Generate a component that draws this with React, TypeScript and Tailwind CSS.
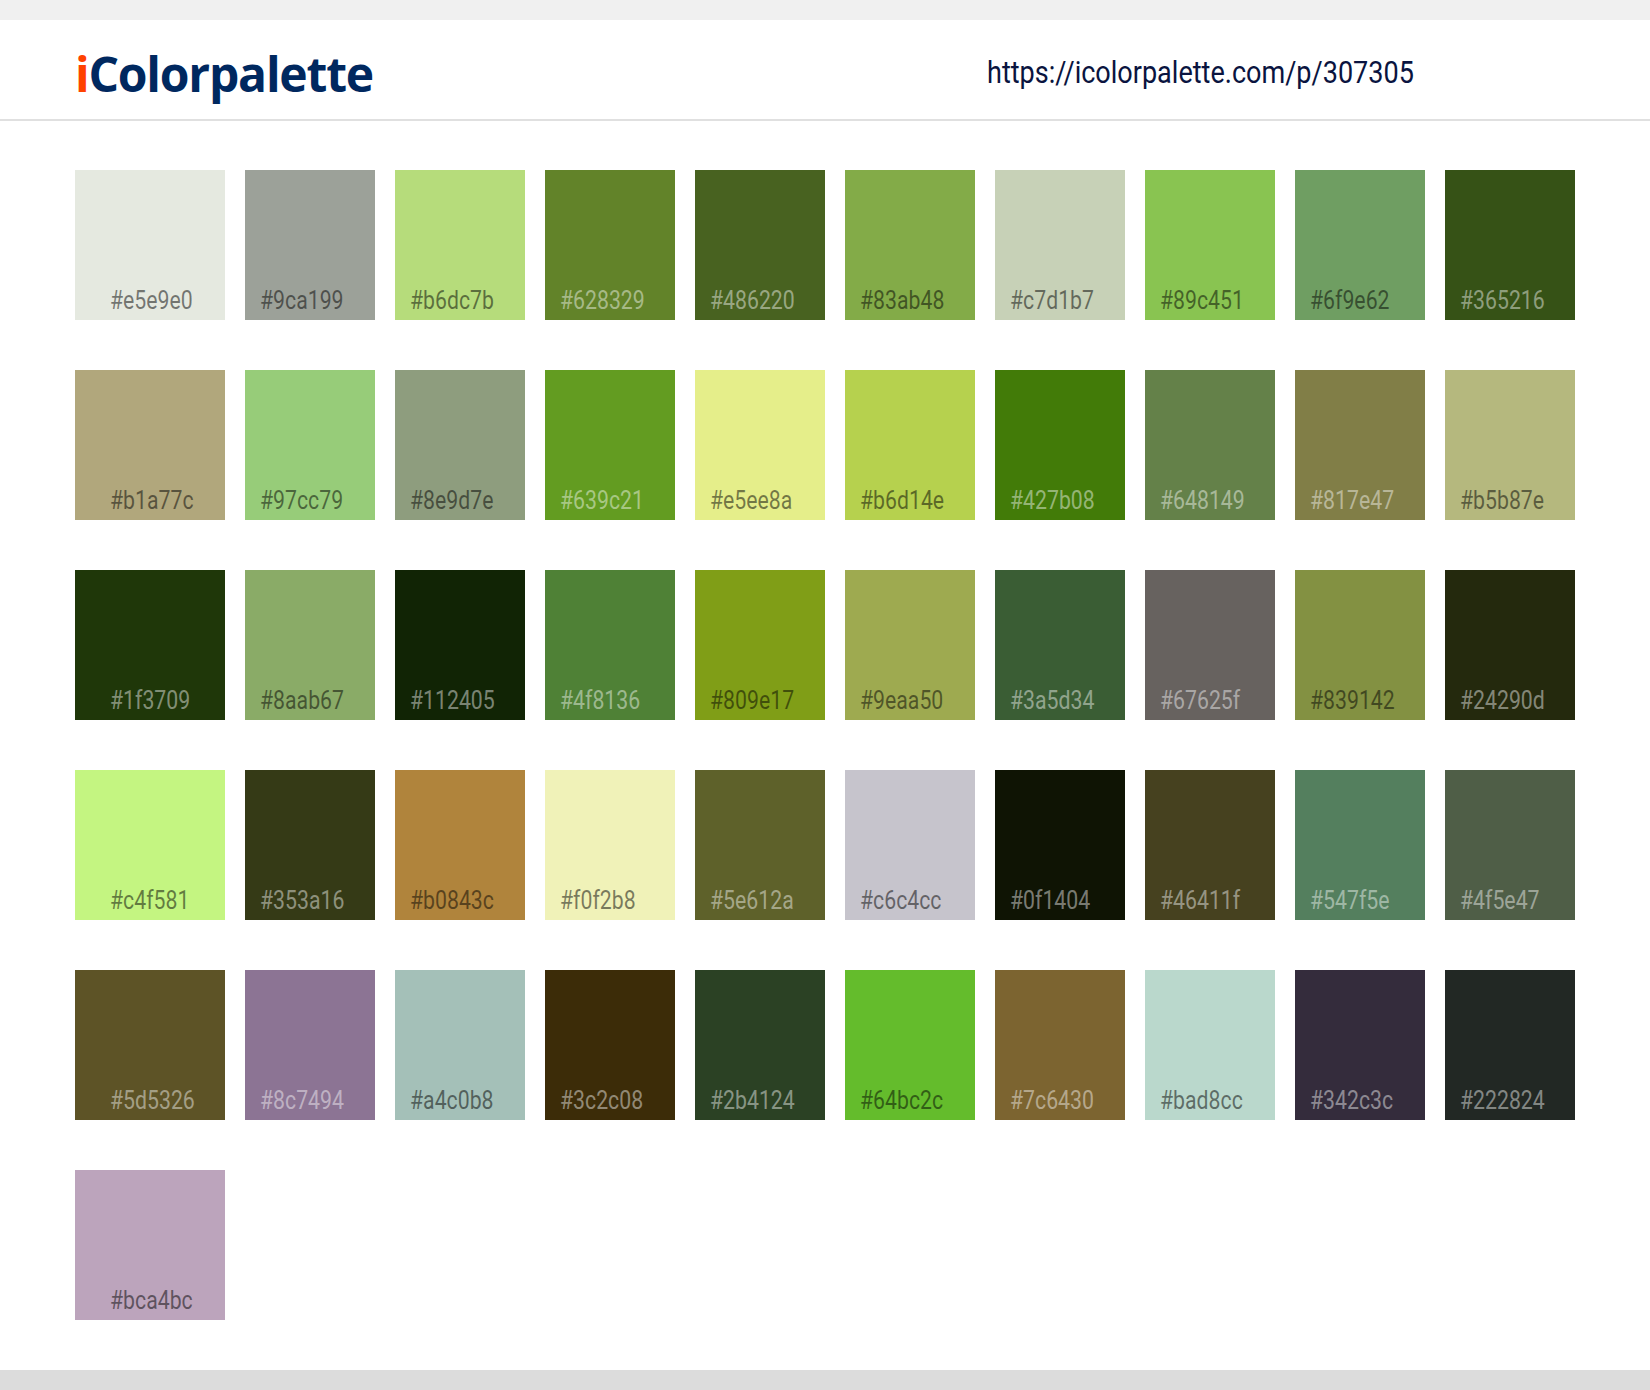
const rows: string[] = "e5e9e0 9ca199 b6dc7b 628329 486220 83ab48 c7d1b7 89c451 6f9e62 365216 b1a77c 97cc79 8e9d7e 639c21 e5ee8a b6d14e 427b08 648149 817e47 b5b87e 1f3709 8aab67 112405 4f8136 809e17 9eaa50 3a5d34 67625f 839142 24290d c4f581 353a16 b0843c f0f2b8 5e612a c6c4cc 0f1404 46411f 547f5e 4f5e47 5d5326 8c7494 a4c0b8 3c2c08 2b4124 64bc2c 7c6430 bad8cc 342c3c 222824 bca4bc".split(" ");

function isDark(hex: string) {
  const r = parseInt(hex.slice(0, 2), 16);
  const g = parseInt(hex.slice(2, 4), 16);
  const b = parseInt(hex.slice(4, 6), 16);
  return (r * 299 + g * 587 + b * 114) / 1000 < 128;
}

function Swatch({ hex, index }: { hex: string; index: number }) {
  const first = index % 10 === 0;
  return (
    <div
      className={`h-[150px] flex items-end pb-[1px] ${first ? "pl-[35px]" : "pl-[15px]"}`}
      style={{ backgroundColor: `#${hex}` }}
    >
      <span
        className={`inline-block origin-left scale-x-[0.85] text-[25px] leading-[36px] whitespace-nowrap font-['Roboto',sans-serif] ${isDark(hex) ? "text-white/45" : "text-black/50"}`}
      >
        #{hex}
      </span>
    </div>
  );
}

export default function App() {
  return (
    <div className="min-h-[1390px] bg-white flex flex-col">
      <div className="h-5 bg-[#f0f0f0]" />
      <header className="h-[101px] border-b-2 border-[#e0e0e0] flex items-center pl-[75px]">
        <div className="w-[912px] text-[48px] font-bold tracking-[-1.2px] leading-none font-['Open_Sans',sans-serif] text-[#00285f] pt-[9px]">
          <span className="text-[#ff4200]">i</span>Colorpalette
        </div>
        <div className="inline-block origin-left scale-x-[0.845] text-[32px] whitespace-nowrap font-['Roboto',sans-serif] text-[#0a1440] pt-1">
          https://icolorpalette.com/p/307305
        </div>
      </header>
      <main className="flex-1 pt-[49px] pl-[75px]">
        <div className="grid grid-cols-[150px_repeat(9,130px)] gap-x-5 gap-y-[50px]">
          {rows.map((hex, i) => (
            <Swatch key={hex} hex={hex} index={i} />
          ))}
        </div>
      </main>
      <div className="h-5 bg-[#dcdcdc] mt-[50px]" />
    </div>
  );
}
